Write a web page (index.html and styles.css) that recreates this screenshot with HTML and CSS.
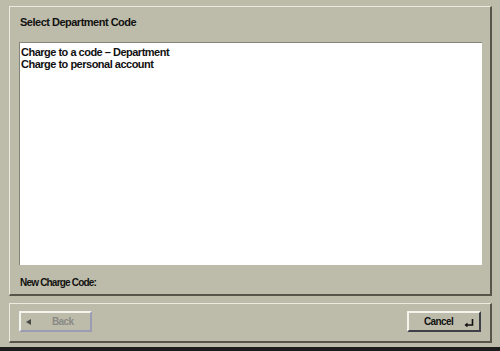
FILE: index.html
```html
<!doctype html>
<html lang="en">

<head>
  <meta charset="utf-8">
  <title>Select Department Code</title>
  <meta name="viewport" content="width=device-width, initial-scale=1">
  <link rel="stylesheet" href="styles.css">
</head>

<body>
  <div class="screen">
    <div class="panel main-panel">
      <h1 class="title">Select Department Code</h1>

      <ul class="listbox">
        <li>Charge to a code &ndash; Department</li>
        <li>Charge to personal account</li>
      </ul>

      <div class="field-label">New Charge Code:</div>
    </div>

    <div class="panel footer-panel">
      <button class="btn btn-back" disabled>
        <span class="arrow-left"></span>
        <span class="btn-text">Back</span>
      </button>

      <button class="btn btn-cancel">
        <span class="btn-text">Cancel</span>
        <svg class="enter-icon" width="10" height="8" viewBox="0 0 10 8">
          <path d="M8.5 0 V6 H2" fill="none" stroke="#111" stroke-width="1.6"/>
          <path d="M0.5 6 L3.5 3.5 V8.5 Z" fill="#111"/>
        </svg>
      </button>
    </div>
  </div>
  <div class="bottom-strip"></div>
</body>

</html>
```

FILE: styles.css
```css
body {
  margin: 0;
  background: #bdbcaa;
  font-family: "Liberation Sans", Arial, sans-serif;
  letter-spacing: -0.5px;
  color: #111;
}

.screen {
  height: 347px;
  padding: 6px 8px 0 9px;
  box-sizing: border-box;
}

.panel {
  box-sizing: border-box;
  border-top: 1px solid #ecebdf;
  border-left: 1px solid #ecebdf;
  border-right: 2px solid #55554a;
  border-bottom: 2px solid #55554a;
}

.main-panel {
  height: 290px;
  padding: 9px 0 0 9px;
}

.title {
  margin: 0;
  font-size: 11px;
  line-height: 12px;
  font-weight: 700;
  padding-left: 1px;
}

.listbox {
  list-style: none;
  margin: 14px 0 0 0;
  padding: 3px 0 0 1px;
  width: 463px;
  height: 223px;
  box-sizing: border-box;
  background: #fff;
  border-top: 1px solid #85857a;
  border-left: 1px solid #85857a;
}

.listbox li {
  font-size: 11px;
  line-height: 12px;
  font-weight: 700;
}

.field-label {
  margin-top: 12px;
  font-size: 10px;
  line-height: 12px;
  font-weight: 700;
  letter-spacing: -0.8px;
  padding-left: 1px;
}

.footer-panel {
  margin-top: 7px;
  height: 40px;
  padding: 7px 9px 0 9px;
  display: flex;
  justify-content: space-between;
  align-items: flex-start;
}

.btn {
  box-sizing: border-box;
  height: 21px;
  width: 74px;
  margin: 0;
  padding: 0 4px;
  background: #bdbcaa;
  border-top: 2px solid #f4f4ee;
  border-left: 2px solid #f4f4ee;
  border-right: 2px solid #3f3f48;
  border-bottom: 2px solid #3f3f48;
  font-family: inherit;
  letter-spacing: -0.6px;
  font-size: 10px;
  font-weight: 700;
  display: flex;
  align-items: center;
}

.btn-back {
  width: 73px;
  color: #8a8a86;
  border-right-color: #9b9bb6;
  border-bottom-color: #9b9bb6;
}

.arrow-left {
  width: 0;
  height: 0;
  border-top: 3px solid transparent;
  border-bottom: 3px solid transparent;
  border-right: 5px solid #4a4a48;
  margin-left: 1px;
}

.btn-back .btn-text {
  margin-left: 21px;
}

.btn-cancel {
  color: #111;
  justify-content: space-between;
}

.btn-cancel .btn-text {
  margin-left: 11px;
}

.enter-icon {
  margin-right: 1px;
  margin-top: 3px;
}

.bottom-strip {
  height: 4px;
  background: #1c1c1c;
}
```
